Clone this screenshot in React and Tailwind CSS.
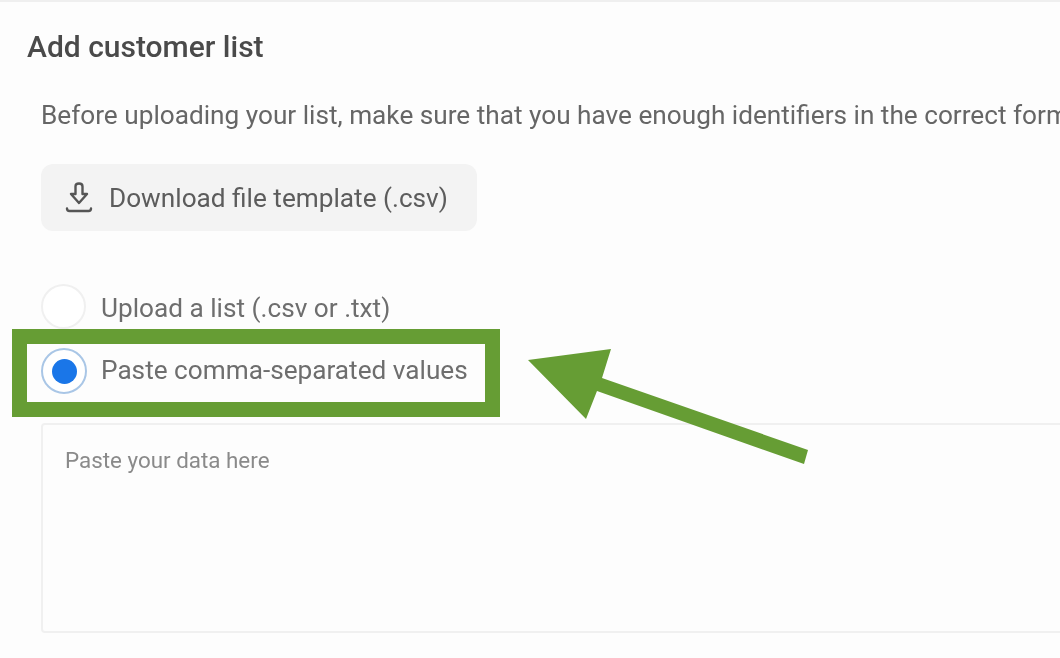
import { useState } from "react";

function Radio({ checked }) {
    if (checked) {
        return (
            <span className="flex h-[46px] w-[46px] shrink-0 items-center justify-center rounded-full border-2 border-[#a9c6e6] bg-white">
                <span className="h-[25px] w-[25px] rounded-full bg-[#1a76e8]"></span>
            </span>
        );
    }
    return <span className="h-[45px] w-[45px] shrink-0 rounded-full border-2 border-[#f0f0f0] bg-white"></span>;
}

function DownloadIcon() {
    return (
        <svg width="28" height="32" viewBox="0 0 28 32" fill="none" stroke="#555555" strokeWidth="2.4">
            <path d="M10.500 4.500q0-3 3.500-3t3.500 3v7.500h4.500L14 21 6 12h4.500z" strokeLinejoin="round" />
            <path d="M2 26.500q0 2.500 2.500 2.500h19q2.500 0 2.500-2.500" strokeLinecap="round" />
        </svg>
    );
}

export default function App() {
    const [value, setValue] = useState("");

    return (
        <div className="relative h-[658px] w-[1060px] overflow-hidden border-t-2 border-[#efefef] bg-[#fdfdfd] font-['Roboto',sans-serif]">
            <div className="blur-[0.7px]">
                <h1 className="ml-[27px] mt-[27px] text-[30px] font-medium leading-[36px] text-[#4a4a4a]">Add customer list</h1>

                <p className="ml-[41px] mt-[33px] whitespace-nowrap text-[26.2px] leading-[34px] text-[#666666]">
                    Before uploading your list, make sure that you have enough identifiers in the correct format
                </p>

                <button className="ml-[41px] mt-[32px] flex h-[67px] w-[436px] items-center gap-[16px] rounded-[12px] bg-[#f3f3f3] pl-[24px] text-[26.2px] leading-[32px] text-[#5c5c5c]">
                    <DownloadIcon />
                    <span>Download file template (.csv)</span>
                </button>

                <div className="ml-[41px] mt-[53px] flex items-center gap-[15px] text-[26.2px] leading-[30px] text-[#6e6e6e]">
                    <Radio />
                    <span className="pt-[2px]">Upload a list (.csv or .txt)</span>
                </div>

                <div className="ml-[41px] mt-[19px] flex items-center gap-[14px] text-[26.2px] leading-[30px] text-[#6e6e6e]">
                    <Radio checked />
                    <span className="pb-[2px]">Paste comma-separated values</span>
                </div>

                <textarea
                    value={value}
                    onChange={(e) => setValue(e.target.value)}
                    placeholder="Paste your data here"
                    className="ml-[41px] mt-[29px] block h-[210px] w-[1100px] resize-none rounded-[4px] border-2 border-[#f0f0f0] bg-[#fdfdfd] px-[22px] py-[21px] text-[22.400px] leading-[28px] text-[#777777] placeholder:text-[#8a8a8a]"
                ></textarea>
            </div>

            {/* green annotation drawn over the screenshot */}
            <div className="absolute left-[12px] top-[327px] h-[88px] w-[488px] border-[15px] border-[#669d34]"></div>
            <svg className="absolute left-0 top-[-2px]" width="1060" height="658" viewBox="0 0 1060 658">
                <polygon points="528,360 611,349 602,378 808,450 804,464 597,391 586,419" fill="#669d34" />
            </svg>
        </div>
    );
}
